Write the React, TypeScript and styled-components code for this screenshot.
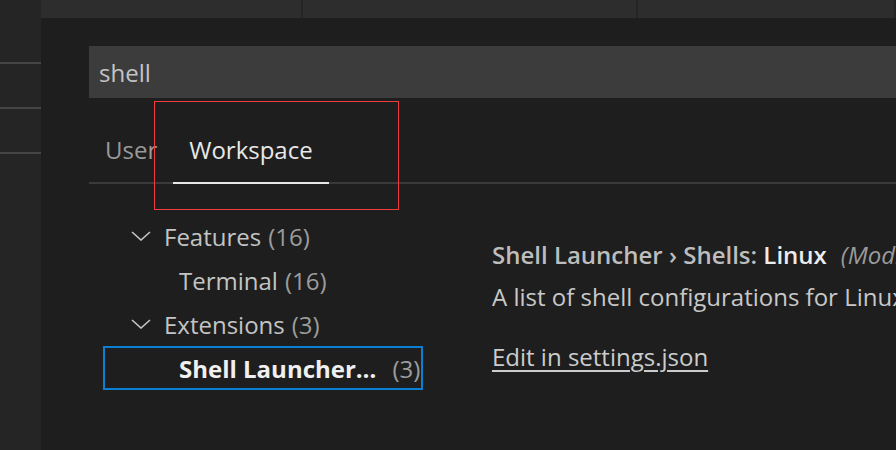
import React from "react";
import styled, { createGlobalStyle } from "styled-components";

const GlobalStyle = createGlobalStyle`
  html, body {
    margin: 0;
    padding: 0;
    background: #1e1e1e;
    overflow: hidden;
  }
  body {
    font-family: "Open Sans", "Noto Sans", sans-serif;
  }
`;

const Frame = styled.div`
  display: flex;
  width: 896px;
  height: 450px;
  overflow: hidden;
  background: #1e1e1e;
`;

const Sidebar = styled.div`
  width: 41px;
  flex-shrink: 0;
  background: #252526;
  padding-top: 62px;
  box-sizing: border-box;
`;

const SideRow = styled.div`
  height: 43px;
  border-top: 2px solid #454545;
`;

const Main = styled.div`
  flex: 1;
  display: flex;
  flex-direction: column;
  min-width: 0;
  position: relative;
`;

const TabStrip = styled.div`
  display: flex;
  height: 18px;
  background: #2d2d2d;
  flex-shrink: 0;
`;

const EditorTab = styled.div<{ $w?: number }>`
  height: 100%;
  width: ${(p) => (p.$w ? `${p.$w}px` : "auto")};
  flex: ${(p) => (p.$w ? "none" : "1")};
  border-right: 2px solid #252526;
`;

const Content = styled.div`
  padding: 28px 0 0 48px;
  display: flex;
  flex-direction: column;
`;

const SearchBox = styled.div`
  height: 52px;
  background: #3c3c3c;
  display: flex;
  align-items: center;
  padding-left: 10px;
  font-size: 24px;
  color: #c4c4c4;
`;

const Tabs = styled.div`
  display: flex;
  height: 86px;
  border-bottom: 2px solid #3a3a3a;
  box-sizing: border-box;
`;

const Tab = styled.div<{ $active?: boolean }>`
  display: flex;
  align-items: center;
  padding: 16px 16px 0;
  font-size: 24px;
  color: ${(p) => (p.$active ? "#e8e8e8" : "#9a9a9a")};
  box-shadow: ${(p) => (p.$active ? "inset 0 -2px 0 #e7e7e7" : "none")};
  margin-bottom: -2px;
`;

const Highlight = styled.div`
  position: absolute;
  left: 113px;
  top: 101px;
  width: 245px;
  height: 109px;
  border: 1px solid #f03c3c;
  box-sizing: border-box;
  pointer-events: none;
`;

const Body = styled.div`
  display: flex;
  padding-top: 30px;
`;

const Tree = styled.div`
  width: 320px;
  margin-left: 14px;
  flex-shrink: 0;
`;

const Row = styled.div<{ $indent: number; $selected?: boolean }>`
  height: 44px;
  box-sizing: border-box;
  display: flex;
  align-items: center;
  padding-left: ${(p) => p.$indent}px;
  font-size: 24px;
  white-space: nowrap;
  border: 2px solid ${(p) => (p.$selected ? "#0a7fd4" : "transparent")};
`;

const Chevron = styled.svg`
  width: 20px;
  height: 10px;
  margin-right: 13px;
  flex-shrink: 0;
`;

const Label = styled.span<{ $bold?: boolean }>`
  color: ${(p) => (p.$bold ? "#f0f0f0" : "#c4c4c4")};
  font-weight: ${(p) => (p.$bold ? 700 : 400)};
`;

const Count = styled.span<{ $gap?: number }>`
  color: #9c9c9c;
  margin-left: ${(p) => p.$gap ?? 7}px;
`;

const Detail = styled.div`
  flex: 1;
  min-width: 0;
  margin-left: 69px;
  padding-top: 20px;
  white-space: nowrap;
  overflow: hidden;
  font-size: 24px;
`;

const Title = styled.div`
  height: 40px;
  display: flex;
  align-items: center;
  font-weight: 600;
  color: #bdbdbd;
`;

const Key = styled.span`
  color: #ececec;
`;

const Scope = styled.span`
  font-weight: 400;
  font-style: italic;
  color: #9a9a9a;
  margin-left: 14px;
`;

const Description = styled.div`
  height: 44px;
  display: flex;
  align-items: center;
  color: #c8c8c8;
`;

const Link = styled.a`
  display: inline-block;
  margin-top: 22px;
  color: #cccccc;
  text-decoration: underline;
  text-underline-offset: 4px;
`;

function ChevronDown() {
  return (
    <Chevron viewBox="0 0 20 10">
      <path d="M1 1 L10 9 L19 1" fill="none" stroke="#c5c5c5" strokeWidth="1.6" />
    </Chevron>
  );
}

export default function App() {
  return (
    <>
      <GlobalStyle />
      <Frame>
        <Sidebar>
          <SideRow />
          <SideRow />
          <SideRow />
        </Sidebar>
        <Main>
          <TabStrip>
            <EditorTab $w={260} />
            <EditorTab $w={333} />
            <EditorTab />
          </TabStrip>
          <Content>
            <SearchBox>shell</SearchBox>
            <Tabs>
              <Tab>User</Tab>
              <Tab $active>Workspace</Tab>
            </Tabs>
            <Body>
              <Tree>
                <Row $indent={26}>
                  <ChevronDown />
                  <Label>Features</Label>
                  <Count>(16)</Count>
                </Row>
                <Row $indent={74}>
                  <Label>Terminal</Label>
                  <Count>(16)</Count>
                </Row>
                <Row $indent={26}>
                  <ChevronDown />
                  <Label>Extensions</Label>
                  <Count>(3)</Count>
                </Row>
                <Row $indent={74} $selected>
                  <Label $bold>Shell Launcher…</Label>
                  <Count $gap={16}>(3)</Count>
                </Row>
              </Tree>
              <Detail>
                <Title>
                  Shell Launcher › Shells:&nbsp;<Key>Linux</Key>
                  <Scope>(Modified in: User)</Scope>
                </Title>
                <Description>A list of shell configurations for Linux</Description>
                <Link href="#">Edit in settings.json</Link>
              </Detail>
            </Body>
          </Content>
          <Highlight />
        </Main>
      </Frame>
    </>
  );
}
